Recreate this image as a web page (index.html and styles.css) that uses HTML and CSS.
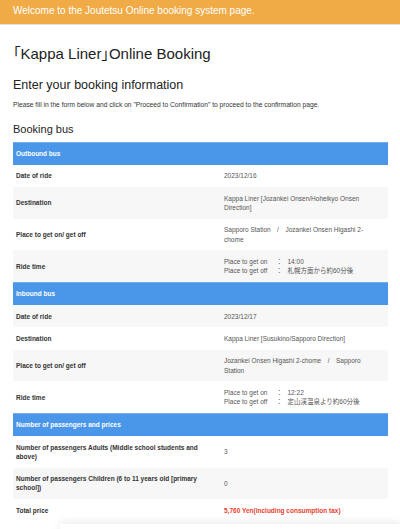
FILE: index.html
```html
<!DOCTYPE html>
<html lang="en">
<head>
<meta charset="utf-8">
<title>Kappa Liner Online Booking</title>
<link rel="stylesheet" href="styles.css">
</head>
<body>
<div class="banner">Welcome to the Joutetsu Online booking system page.</div>
<main class="page">
  <h1 class="title"><span class="br">「</span>Kappa Liner<span class="br">」</span>Online Booking</h1>
  <h2 class="subtitle">Enter your booking information</h2>
  <p class="lead">Please fill in the form below and click on "Proceed to Confirmation" to proceed to the confirmation page.</p>
  <h3 class="section">Booking bus</h3>
  <table class="info">
    <colgroup><col class="c-label"><col class="c-value"></colgroup>
    <tbody>
      <tr class="head"><th colspan="2">Outbound bus</th></tr>
      <tr><th>Date of ride</th><td>2023/12/16</td></tr>
      <tr><th>Destination</th><td>Kappa Liner [Jozankei Onsen/Hoheikyo Onsen Direction]</td></tr>
      <tr><th>Place to get on/ get off</th><td>Sapporo Station&#8195;/&#8195;Jozankei Onsen Higashi 2-chome</td></tr>
      <tr><th>Ride time</th><td>
        <div class="time"><span class="tl">Place to get on</span><span class="tc">：</span><span class="tv">14:00</span></div>
        <div class="time"><span class="tl">Place to get off</span><span class="tc">：</span><span class="tv">札幌方面から約60分後</span></div>
      </td></tr>
      <tr class="head"><th colspan="2">Inbound bus</th></tr>
      <tr><th>Date of ride</th><td>2023/12/17</td></tr>
      <tr><th>Destination</th><td>Kappa Liner [Susukino/Sapporo Direction]</td></tr>
      <tr><th>Place to get on/ get off</th><td>Jozankei Onsen Higashi 2-chome&#8195;/&#8195;Sapporo Station</td></tr>
      <tr><th>Ride time</th><td>
        <div class="time"><span class="tl">Place to get on</span><span class="tc">：</span><span class="tv">12:22</span></div>
        <div class="time"><span class="tl">Place to get off</span><span class="tc">：</span><span class="tv">定山渓温泉より約60分後</span></div>
      </td></tr>
      <tr class="head"><th colspan="2">Number of passengers and prices</th></tr>
      <tr><th>Number of passengers Adults (Middle school students and above)</th><td>3</td></tr>
      <tr><th>Number of passengers Children (6 to 11 years old [primary school])</th><td>0</td></tr>
      <tr><th>Total price</th><td class="price">5,760 Yen(including consumption tax)</td></tr>
    </tbody>
  </table>
</main>
<div class="footer-bar"></div>
</body>
</html>
```

FILE: styles.css
```css
html, body {
  margin: 0;
  padding: 0;
  background: #ffffff;
}
body {
  font-family: "Liberation Sans", Arial, "Noto Sans CJK JP", sans-serif;
  color: #333333;
}
.banner {
  height: 25px;
  box-sizing: border-box;
  padding: 0 13px;
  line-height: 21.7px;
  font-size: 10px;
  color: #ffffff;
  background: #f0ab46;
  border-bottom: 1px solid #e2e2e2;
}
.page {
  padding: 0 12px 0 13px;
}
.title {
  margin: 20px 0 0;
  font-size: 15px;
  line-height: 16px;
  font-weight: normal;
  color: #222;
}
.br {
  font-family: "Noto Sans CJK JP", sans-serif;
  font-feature-settings: "palt";
}
.subtitle {
  margin: 16px 0 0;
  font-size: 12.5px;
  line-height: 14px;
  font-weight: normal;
  color: #222;
}
.lead {
  margin: 8.4px 0 0;
  font-size: 6.7px;
  line-height: 9px;
  color: #333;
}
.section {
  margin: 13.5px 0 0;
  font-size: 11px;
  line-height: 12px;
  font-weight: normal;
  color: #222;
}
.info {
  margin-top: 7px;
  width: 100%;
  table-layout: fixed;
  border-collapse: collapse;
  font-size: 6.5px;
  line-height: 9.2px;
}
.c-label {
  width: 208px;
}
.info th, .info td {
  padding: 6.6px 3px;
  text-align: left;
  vertical-align: middle;
}
.info th {
  font-weight: bold;
  color: #333;
  padding-right: 13px;
}
.info td {
  color: #555;
  padding-right: 12px;
}
.info tr:nth-child(odd) {
  background: #f7f7f7;
}
.info tr.head {
  background: #4a96e8;
}
.info tr.head th {
  color: #ffffff;
  padding: 6.4px 3px;
  border-top: 1px solid #74aef0;
}
.time {
  display: flex;
}
.tl {
  width: 52px;
  flex: none;
}
.tc {
  font-family: "Noto Sans CJK JP", sans-serif;
  width: 8px;
  flex: none;
}
.tv {
  margin-left: 3.5px;
  font-family: "Liberation Sans", "Noto Sans CJK JP", sans-serif;
}
.info td.price {
  color: #e8412e;
  font-weight: bold;
}
.footer-bar {
  position: fixed;
  left: 60px;
  right: 0;
  top: 524px;
  height: 40px;
  background: #ffffff;
  box-shadow: 0 -2px 8px rgba(0, 0, 0, 0.08);
}
```
